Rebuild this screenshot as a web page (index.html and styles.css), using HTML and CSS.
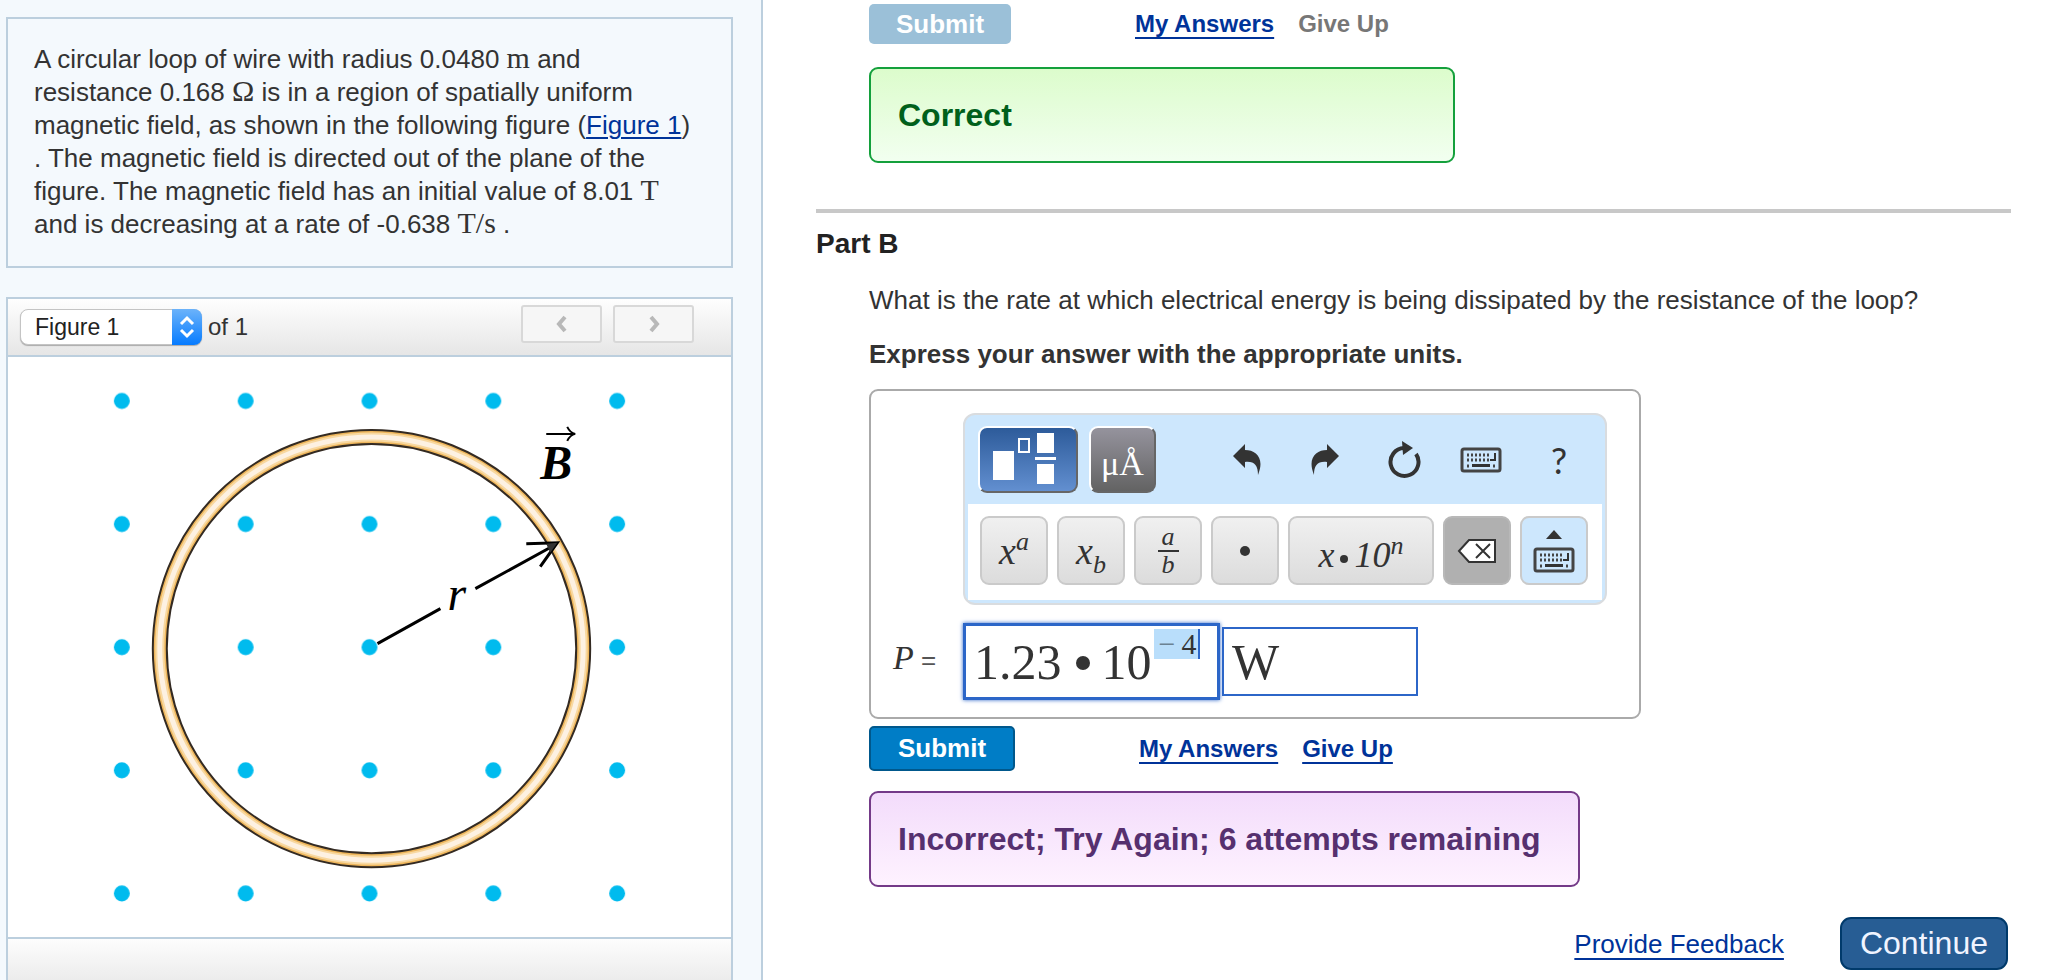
FILE: index.html
```html
<!DOCTYPE html>
<html lang="en">
<head>
    <meta charset="UTF-8">
    <meta name="viewport" content="width=device-width, initial-scale=1.0">
    <title>Energy dissipated in a loop</title>
    <link rel="stylesheet" href="styles.css">
</head>
<body>
    <div class="page">
        <aside class="sidebar">
            <p class="problem">
                A circular loop of wire with radius 0.0480 <span class="unit">m</span> and resistance 0.168 <span class="unit">Ω</span> is in a region of spatially uniform magnetic field, as shown in the following figure (<a href="#figure">Figure 1</a>) . The magnetic field is directed out of the plane of the figure. The magnetic field has an initial value of 8.01 <span class="unit">T</span> and is decreasing at a rate of -0.638 <span class="unit">T/s</span> .
            </p>

            <!-- Figure viewer -->
            <section class="viewer" id="figure">
                <div class="viewer-bar">
                    <div class="picker">
                        <select id="figureSelect">
                            <option>Figure 1</option>
                        </select>
                        <svg class="picker-arrows" viewBox="0 0 30 36">
                            <path d="M9 15l6-6 6 6M9 21l6 6 6-6"/>
                        </svg>
                    </div>
                    <label for="figureSelect">of 1</label>
                    <div class="pager">
                        <button aria-label="Previous figure"><svg viewBox="0 0 12 18"><path d="M9 2L3 9l6 7"/></svg></button>
                        <button aria-label="Next figure"><svg viewBox="0 0 12 18"><path d="M3 2l6 7-6 7"/></svg></button>
                    </div>
                </div>
                <svg class="drawing" viewBox="0 0 724 581">
                    <defs>
                        <pattern id="field" x="52" y="-18" width="124" height="123.3" patternUnits="userSpaceOnUse">
                            <circle cx="62" cy="62" r="8" fill="#00bbee"/>
                        </pattern>
                    </defs>
                    <rect x="52" y="0" width="620" height="581" fill="url(#field)"/>
                    <g fill="none">
                        <circle cx="364" cy="292" r="212" stroke="#332a22" stroke-width="16"/>
                        <circle cx="364" cy="292" r="212" stroke="#eeb65c" stroke-width="12"/>
                        <circle cx="364" cy="292" r="212" stroke="#f8d8a0" stroke-width="9"/>
                        <circle cx="364" cy="292" r="212" stroke="#fdf1e2" stroke-width="5"/>
                    </g>
                    <path d="M370 287l63-35M468 232l80-44M519 187l31-1-17 24" fill="none" stroke="#000" stroke-width="3"/>
                    <path d="M550 186l-11 1 4 9z"/>
                    <path d="M539 77h28M560 70q3 6 8 7q-5 1-8 7" fill="none" stroke="#000" stroke-width="2"/>
                    <text class="vector" x="533" y="122">B</text>
                    <text class="radius" x="440" y="253">r</text>
                </svg>
                <div class="viewer-foot"></div>
            </section>
        </aside>

        <main class="work">
            <div class="part">
                <div class="actions">
                    <button class="submit" disabled>Submit</button>
                    <a href="#answers">My Answers</a>
                    <span class="off">Give Up</span>
                </div>
                <div class="result correct">Correct</div>
            </div>

            <h2>Part B</h2>
            <div class="part">
                <p class="question">What is the rate at which electrical energy is being dissipated by the resistance of the loop?</p>
                <p class="hint">Express your answer with the appropriate units.</p>

                <div class="answer">
                    <div class="toolbar">
                        <div class="tools">
                            <button class="mode templates" aria-label="Templates">
                                <svg viewBox="0 0 64 52">
                                    <path d="M0 19h21v29H0zM44 1h17v20H44zM44 32h17v20H44zM42 25h21v3H42z"/>
                                    <path d="M26 7h10v13H26z" fill="none" stroke="#fff" stroke-width="2"/>
                                </svg>
                            </button>
                            <button class="mode symbols">μÅ</button>
                            <div class="icons">
                                <button aria-label="Undo"><svg width="30" height="32" viewBox="0 0 30 32"><path d="M1 12L13 0v6c11 0 20 8 13 25c0-10-4-14-13-13v6z"/></svg></button>
                                <button aria-label="Redo"><svg width="30" height="32" viewBox="0 0 30 32"><path d="M29 12L17 0v6C6 6-3 14 4 31c0-10 4-14 13-13v6z"/></svg></button>
                                <button aria-label="Reset"><svg width="36" height="40" viewBox="0 0 36 40"><path d="M19 8A14 14 0 1 0 31 14" fill="none" stroke="#333" stroke-width="4"/><path d="M17 1l11 7-10 7z"/></svg></button>
                                <button aria-label="Keyboard shortcuts">
                                    <svg width="42" height="26" viewBox="0 0 42 26">
                                        <rect x="2" y="2" width="38" height="22" rx="2" fill="none" stroke="#444" stroke-width="3"/>
                                        <path d="M7 8h24M7 13h24M7 19h3M33 19h3" fill="none" stroke="#444" stroke-width="3" stroke-dasharray="2 2"/>
                                        <path d="M12 17h18v3H12zM34 6h2v8h-6v-2h4z"/>
                                    </svg>
                                </button>
                                <button class="help" aria-label="Help">?</button>
                            </div>
                        </div>
                        <div class="keys">
                            <button><i>x<sup>a</sup></i></button>
                            <button><i>x<sub>b</sub></i></button>
                            <button><span class="fraction"><i>a</i><i>b</i></span></button>
                            <button aria-label="Multiply"><span class="dot"></span></button>
                            <button class="wide"><i class="power">x<span class="dot small"></span>10<sup>n</sup></i></button>
                            <button class="delete" aria-label="Delete">
                                <svg width="40" height="24" viewBox="0 0 40 24">
                                    <path d="M2 12L12 1h26v22H12z" fill="#fff" stroke="#333" stroke-width="2"/>
                                    <path d="M19 5l14 14M33 5L19 19" fill="none" stroke="#333" stroke-width="2"/>
                                </svg>
                            </button>
                            <button class="expand" aria-label="Show keyboard">
                                <svg width="42" height="44" viewBox="0 0 42 44">
                                    <path d="M13 10l8-9 8 9z"/>
                                    <g transform="translate(0 18)">
                                        <rect x="2" y="2" width="38" height="22" rx="2" fill="none" stroke="#444" stroke-width="3"/>
                                        <path d="M7 8h24M7 13h24M7 19h3M33 19h3" fill="none" stroke="#444" stroke-width="3" stroke-dasharray="2 2"/>
                                        <path d="M12 17h18v3H12zM34 6h2v8h-6v-2h4z"/>
                                    </g>
                                </svg>
                            </button>
                        </div>
                    </div>
                    <label class="symbol" id="valueLabel" for="units"><i>P</i> =</label>
                    <div class="fields">
                        <div class="value" role="textbox" contenteditable="true" aria-labelledby="valueLabel">1.23<span class="dot big"></span>10<span class="exponent"><span class="minus">−</span>4</span></div>
                        <input class="units" id="units" type="text" value="W">
                    </div>
                </div>

                <div class="actions second">
                    <button class="submit">Submit</button>
                    <a href="#answers">My Answers</a>
                    <a href="#giveup">Give Up</a>
                </div>
                <div class="result incorrect">Incorrect; Try Again; 6 attempts remaining</div>
            </div>

            <div class="bottom">
                <a href="#feedback">Provide Feedback</a>
                <button class="continue">Continue</button>
            </div>
        </main>
    </div>
</body>
</html>
```
FILE: styles.css
```css
* {
    box-sizing: border-box;
}
body {
    margin: 0;
    font-family: "Liberation Sans", Arial, sans-serif;
    font-size: 26px;
    line-height: 32px;
    color: #333;
    background-color: white;
}
p, h2 {
    margin: 0;
}
a {
    color: #003399;
    text-decoration-thickness: 2px;
    text-underline-offset: 5px;
}
button {
    font-family: inherit;
    padding: 0;
    cursor: pointer;
}
svg {
    display: block;
    fill: #333;
}
.page {
    display: flex;
    min-height: 100vh;
}

/* Left column */
.sidebar {
    flex: 0 0 763px;
    display: flex;
    flex-direction: column;
    gap: 29px;
    padding: 17px 28px 0 6px;
    background-color: #f4f9fd;
    border-right: 2px solid #bccfde;
}
.problem {
    padding: 24px 33px 25px 26px;
    line-height: 33px;
    border: 2px solid #bccfde;
}
.problem a {
    text-underline-offset: 3px;
}
.unit {
    font-family: "Liberation Serif", serif;
    font-size: 30px;
    line-height: 30px;
}
.viewer {
    flex: 1;
    display: flex;
    flex-direction: column;
    border: 2px solid #bccfde;
    border-bottom: none;
    background-color: white;
}
.viewer-bar {
    display: flex;
    align-items: center;
    height: 58px;
    padding: 0 37px 0 12px;
    font-size: 24px;
    background: linear-gradient(#fefefe, #e6e6e6);
    border-bottom: 2px solid #bccfde;
}
.picker {
    position: relative;
    margin-right: 6px;
}
.picker select {
    display: block;
    appearance: none;
    width: 182px;
    height: 36px;
    padding: 0 14px;
    font-family: inherit;
    font-size: 23px;
    color: #222;
    background-color: white;
    border: 1px solid #c4c4c4;
    border-radius: 8px;
    box-shadow: 0 1px 1px #aaa;
}
.picker-arrows {
    position: absolute;
    top: 0;
    right: 0;
    width: 30px;
    height: 36px;
    background: linear-gradient(#6cb3fa, #067bff);
    border-radius: 0 8px 8px 0;
    pointer-events: none;
}
.picker-arrows path {
    fill: none;
    stroke: white;
    stroke-width: 3;
}
.pager {
    display: flex;
    gap: 11px;
    margin-left: auto;
}
.pager button {
    display: flex;
    align-items: center;
    justify-content: center;
    width: 81px;
    height: 38px;
    margin-bottom: 6px;
    background-color: #f6f6f6;
    border: 2px solid #d8d8d8;
    border-radius: 3px;
}
.pager svg {
    width: 12px;
    height: 18px;
    fill: none;
    stroke: #b8b8b8;
    stroke-width: 4;
}
.drawing {
    width: 100%;
}
.drawing text {
    font-family: "Liberation Serif", serif;
    font-style: italic;
    font-size: 48px;
    fill: black;
}
.drawing .vector {
    font-weight: bold;
}
.viewer-foot {
    flex: 1;
    min-height: 40px;
    border-top: 2px solid #bccfde;
    background: linear-gradient(#fdfdfd, #ececec);
}

/* Right column */
.work {
    flex: 1;
    padding: 4px 35px 10px 53px;
}
.part {
    margin-left: 53px;
}
.actions {
    display: flex;
    align-items: center;
    gap: 24px;
    font-size: 24px;
    font-weight: bold;
    margin-bottom: 23px;
}
.actions.second {
    margin: 7px 0 20px;
}
.submit {
    width: 146px;
    height: 45px;
    margin-right: 100px;
    font-size: 26px;
    font-weight: bold;
    color: white;
    background-color: #007dc6;
    border: 2px solid #00588c;
    border-radius: 5px;
}
.submit:disabled {
    width: 142px;
    height: 40px;
    color: white;
    background-color: #9bc0d8;
    border: none;
    cursor: default;
}
.off {
    color: #777;
}
.result {
    width: fit-content;
    padding: 30px 37px 30px 27px;
    font-size: 32px;
    font-weight: bold;
    border: 2px solid;
    border-radius: 9px;
}
.correct {
    min-width: 586px;
    color: #00601b;
    background: linear-gradient(#dcfccc, #f2fff0);
    border-color: #14a03c;
}
.incorrect {
    color: #56306f;
    background: linear-gradient(#f3dcfb, #fef2ff);
    border-color: #743a88;
}
h2 {
    margin-top: 46px;
    padding-top: 15px;
    font-size: 28px;
    color: #222;
    border-top: 4px solid #c8c8c8;
}
.question {
    margin: 24px 0 22px;
}
.hint {
    font-weight: bold;
    margin-bottom: 19px;
}

/* Answer editor */
.answer {
    display: grid;
    grid-template-columns: 70px auto;
    row-gap: 18px;
    width: fit-content;
    padding: 22px 32px 17px 22px;
    border: 2px solid #aaa;
    border-radius: 9px;
}
.toolbar {
    grid-column: 2;
    padding: 0 3px 3px;
    background-color: #cde7fd;
    border: 2px solid #d9dcdf;
    border-radius: 12px;
}
.tools {
    display: flex;
    align-items: center;
    gap: 11px;
    height: 89px;
    padding: 0 4px 0 10px;
}
.mode {
    display: flex;
    align-items: center;
    justify-content: center;
    width: 67px;
    height: 67px;
    font-family: "Liberation Serif", serif;
    font-size: 34px;
    color: white;
    border: 2px solid;
    border-color: white #666 #666 white;
    border-radius: 9px;
}
.templates {
    width: 100px;
    padding: 0 6px 4px 0;
    background: linear-gradient(#2d5b9a, #628fd0);
}
.templates svg {
    width: 64px;
    height: 52px;
    fill: white;
}
.symbols {
    padding-top: 8px;
    background: linear-gradient(#95939d, #636363);
}
.icons {
    display: flex;
    margin-left: auto;
}
.icons button {
    display: flex;
    align-items: center;
    justify-content: center;
    width: 78px;
    height: 60px;
    color: #333;
    background: none;
    border: none;
}
.icons .help {
    font-family: Lato, sans-serif;
    font-size: 36px;
}
.keys {
    display: flex;
    gap: 9px;
    padding: 12px 14px 15px 12px;
    background-color: white;
}
.keys button {
    display: flex;
    align-items: center;
    justify-content: center;
    width: 68px;
    height: 69px;
    font-family: "Liberation Serif", serif;
    font-size: 38px;
    line-height: 40px;
    color: #333;
    background: linear-gradient(#f0f0f0, #dcdcdc);
    border: 2px solid #cacaca;
    border-radius: 9px;
}
.keys .wide {
    width: 146px;
    padding-top: 8px;
}
.keys sup, .keys sub {
    font-size: 26px;
    line-height: 0;
}
.keys .delete {
    background: #b0b0b0;
    border-color: #b8b8b8;
}
.keys .expand {
    background: #cde7fd;
}
.power {
    font-size: 36px;
}
.fraction {
    display: flex;
    flex-direction: column;
    font-size: 26px;
    line-height: 26px;
}
.fraction i {
    padding: 0 4px;
}
.fraction i + i {
    border-top: 2px solid #333;
}
.dot {
    display: inline-block;
    width: 10px;
    height: 10px;
    background-color: #333;
    border-radius: 50%;
}
.dot.small {
    width: 8px;
    height: 8px;
    margin: 0 6px 4px;
}
.dot.big {
    width: 14px;
    height: 14px;
    margin: 2px 12px 0 14px;
}
.symbol {
    align-self: center;
    padding-bottom: 6px;
    font-size: 26px;
    color: #555;
}
.symbol i {
    font-family: "Liberation Serif", serif;
    font-size: 34px;
    color: #333;
}
.fields {
    display: flex;
    align-items: center;
    gap: 2px;
}
.value, .units {
    font-family: "Liberation Serif", serif;
    font-size: 50px;
    color: #333;
    background-color: white;
    border: 2px solid #2c66c8;
}
.value {
    display: flex;
    align-items: center;
    width: 257px;
    height: 77px;
    padding-left: 8px;
    border-width: 3px;
    box-shadow: 0 0 4px #2c66c8;
}
.exponent {
    align-self: flex-start;
    margin: 3px 0 0 2px;
    padding: 0 2px 0 5px;
    font-size: 30px;
    line-height: 30px;
    background-color: #b9defb;
    border-right: 2px solid #2c66c8;
}
.minus {
    margin-right: 6px;
    color: #6b8293;
}
.units {
    width: 196px;
    height: 69px;
    padding: 0 8px;
}

.bottom {
    display: flex;
    align-items: center;
    justify-content: flex-end;
    gap: 56px;
    margin-top: 30px;
}
.continue {
    height: 53px;
    padding: 0 18px;
    margin-right: 3px;
    font-size: 32px;
    color: #f0f4ff;
    background-color: #275d94;
    border: 2px solid #003a6b;
    border-radius: 11px;
}
```
